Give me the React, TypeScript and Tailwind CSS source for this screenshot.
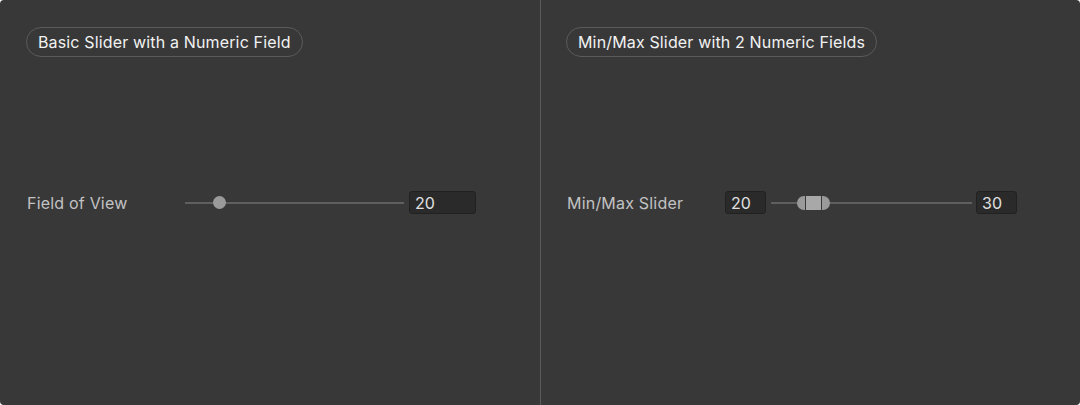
export default function App() {
  const font = { fontFamily: 'Inter, "Noto Sans", sans-serif' };
  return (
    <div className="w-[1080px] h-[405px] bg-white" style={font}>
      <div className="flex w-full h-full rounded-[4px] overflow-hidden bg-[#383838]">
        <div className="w-[540px] h-full flex flex-col pl-[26px] pt-[27px]">
          <div className="self-start h-[30px] px-[11px] flex items-center rounded-full border border-[#5b5b5b] text-[16px] tracking-[0.15px] text-[#f2f2f2]">
            Basic Slider with a Numeric Field
          </div>
          <div className="flex items-center mt-[134px] h-[23px]">
            <span className="w-[159px] pl-[1px] text-[16px] text-[#c2c2c2] tracking-[0.2px]">Field of View</span>
            <div className="relative w-[219px] h-[13px] flex items-center">
              <div className="w-full h-[2px] bg-[#5f5f5f]" />
              <div className="absolute left-[28px] top-0 w-[13px] h-[13px] rounded-full bg-[#9a9a9a]" />
            </div>
            <div className="ml-[5px] w-[67px] h-[23px] rounded-[3px] bg-[#2a2a2a] border border-[#212121] flex items-center pl-[5px] text-[16px] text-[#e0e0e0]">20</div>
          </div>
        </div>
        <div className="w-px h-full bg-[#5a5a5a]" />
        <div className="flex-1 h-full flex flex-col pl-[25px] pt-[27px]">
          <div className="self-start h-[30px] px-[11px] flex items-center rounded-full border border-[#5b5b5b] text-[16px] tracking-[0.15px] text-[#f2f2f2]">
            Min/Max Slider with 2 Numeric Fields
          </div>
          <div className="flex items-center mt-[134px] h-[23px]">
            <span className="w-[159px] pl-[1px] text-[16px] text-[#c2c2c2] tracking-[0.2px]">Min/Max Slider</span>
            <div className="w-[41px] h-[23px] rounded-[3px] bg-[#2a2a2a] border border-[#212121] flex items-center pl-[5px] text-[16px] text-[#e0e0e0]">20</div>
            <div className="relative ml-[5px] w-[201px] h-[14px] flex items-center">
              <div className="w-full h-[2px] bg-[#5f5f5f]" />
              <div className="absolute left-[26px] top-0 h-[14px] flex">
                <div className="w-[8px] h-[14px] rounded-l-full bg-[#9a9a9a]" />
                <div className="w-[1px] h-[14px] bg-[#383838]" />
                <div className="w-[15px] h-[14px] bg-[#a8a8a8]" />
                <div className="w-[1px] h-[14px] bg-[#383838]" />
                <div className="w-[8px] h-[14px] rounded-r-full bg-[#9a9a9a]" />
              </div>
            </div>
            <div className="ml-[4px] w-[41px] h-[23px] rounded-[3px] bg-[#2a2a2a] border border-[#212121] flex items-center pl-[5px] text-[16px] text-[#e0e0e0]">30</div>
          </div>
        </div>
      </div>
    </div>
  );
}
